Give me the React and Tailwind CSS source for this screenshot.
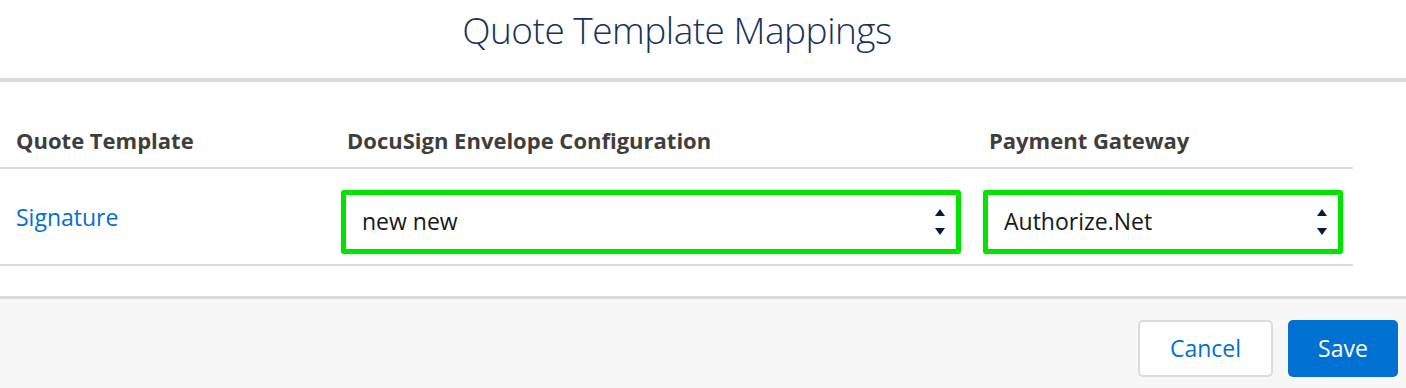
function SelectBox({ value }) {
  return (
    <div className="flex h-[64px] items-center justify-between rounded-[3px] border-[5px] border-[#00e300] bg-white pl-[16px] pr-[10px] shadow-[0_1px_3px_rgba(0,0,0,0.15)]">
      <span className="text-[23px] text-[#181818]">{value}</span>
      <svg width="12" height="28" viewBox="0 0 12 28" className="text-[#061c3f]">
        <path d="M6 1 L11 8 L1 8 Z" fill="currentColor" />
        <path d="M6 27 L11 20 L1 20 Z" fill="currentColor" />
      </svg>
    </div>
  );
}

export default function App() {
  return (
    <div className="flex h-[388px] w-[1406px] flex-col bg-white font-['Open_Sans',sans-serif]">
      <header className="flex h-[82px] items-start justify-center border-b-[4px] border-[#dddbda] pr-[52px] pt-[2px]">
        <h1 className="text-[37px] font-light tracking-[-0.5px] text-[#16325c]">Quote Template Mappings</h1>
      </header>

      <main className="h-[214px] pt-[28px]">
        <div className="w-[1353px]">
          <div className="grid h-[59px] grid-cols-[347px_642px_1fr] items-center border-b-2 border-[#dddbda] pt-[3px]">
            <div className="pl-[16px] text-[22px] font-bold text-[#3e3e3c]">Quote Template</div>
            <div className="text-[22px] font-bold text-[#3e3e3c]">DocuSign Envelope Configuration</div>
            <div className="text-[22px] font-bold text-[#3e3e3c]">Payment Gateway</div>
          </div>
          <div className="grid h-[97px] grid-cols-[341px_642px_1fr] items-center border-b-2 border-[#dddbda]">
            <div className="pl-[16px] pt-[2px] text-[23px] text-[#0070d2]">Signature</div>
            <div className="pr-[22px] pt-[10px]">
              <SelectBox value="new new" />
            </div>
            <div className="pr-[10px] pt-[10px]">
              <SelectBox value="Authorize.Net" />
            </div>
          </div>
        </div>
      </main>

      <footer className="flex flex-1 items-start justify-end gap-[15px] border-t-[3px] border-[#dddbda] bg-[#f7f7f7] pr-[8px] pt-[21px]">
        <button className="h-[57px] w-[135px] rounded-[5px] border-2 border-[#dddbda] bg-white text-[23px] text-[#0070d2]">Cancel</button>
        <button className="h-[57px] w-[110px] rounded-[5px] bg-[#0070d2] text-[23px] text-white">Save</button>
      </footer>
    </div>
  );
}
